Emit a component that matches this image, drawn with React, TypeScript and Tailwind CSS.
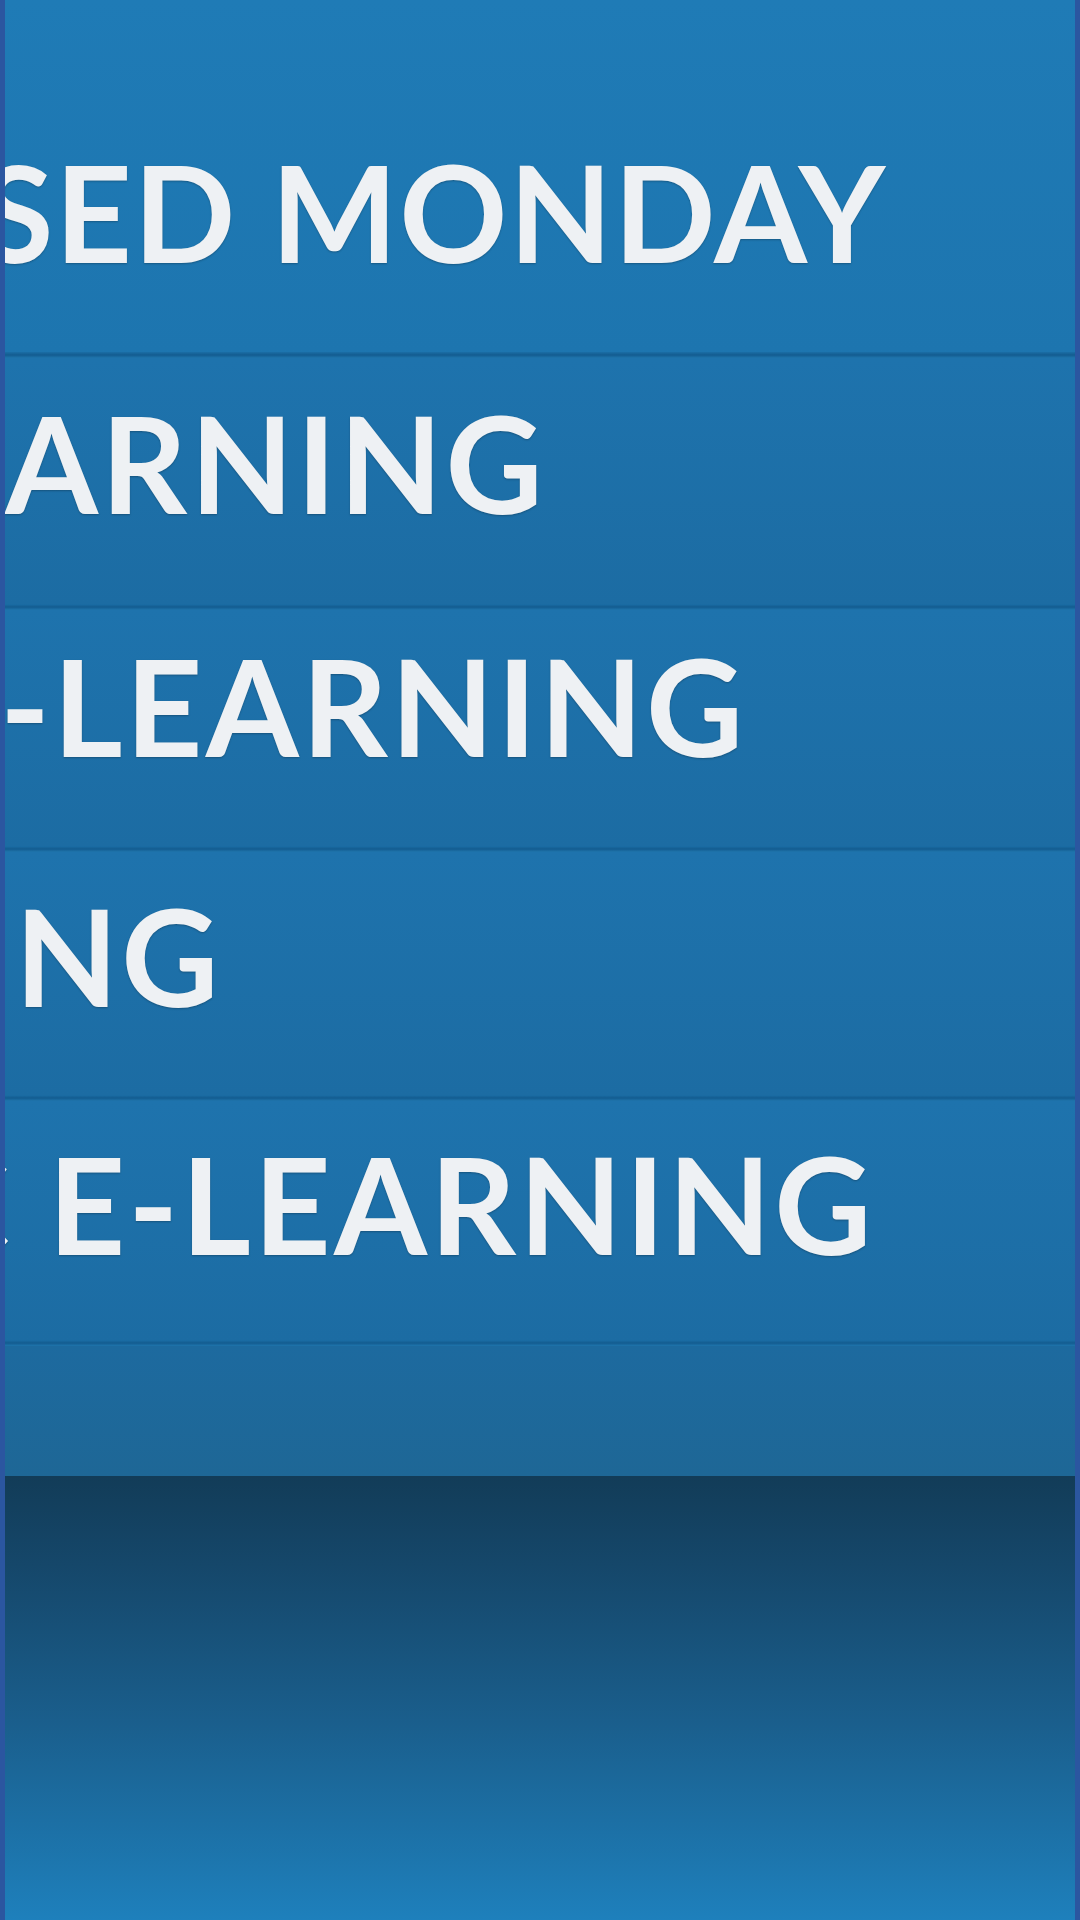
const rows = [
  { label: "ARNING", shift: "ml-0", h: "h-[246px]", pt: "pt-[38px]" },
  { label: "-LEARNING", shift: "-ml-[5px]", h: "h-[236px]", pt: "pt-[29px]" },
  { label: "NG", shift: "ml-[10px]", h: "h-[243px]", pt: "pt-[37px]" },
  { label: "C E-LEARNING", shift: "-ml-[84px]", h: "h-[239px]", pt: "pt-[36px]" },
];

function Divider() {
  return (
    <div className="h-[6px] shrink-0 bg-gradient-to-b from-[#1b6ea6] via-[#135c90] to-[#1f75ad]" />
  );
}

const textCls =
  "whitespace-nowrap text-[134px] font-bold leading-none text-[#eef1f4] [text-shadow:0_1px_2px_rgba(0,0,0,0.25)]";

export default function App() {
  return (
    <div
      className="flex h-[1920px] w-[1080px] flex-col overflow-hidden border-x-[5px] border-[#2b56a0] bg-[#1d70a8]"
      style={{ fontFamily: "Lato, 'Open Sans', sans-serif" }}
    >
      <div className="h-[352px] shrink-0 bg-gradient-to-b from-[#1f7bb6] to-[#1d75af] pt-[145px]">
        <div className={`${textCls} -ml-[25px] tracking-[1.5px]`}>SED MONDAY</div>
      </div>
      {rows.map((r) => (
        <div key={r.label} className="shrink-0">
          <Divider />
          <div className={`${r.h} ${r.pt} bg-gradient-to-b from-[#1e73ad] to-[#1c6ca3]`}>
            <div className={`${textCls} ${r.shift} tracking-[3px]`}>{r.label}</div>
          </div>
        </div>
      ))}
      <Divider />
      <div className="h-[130px] shrink-0 bg-gradient-to-b from-[#1d6a9f] to-[#1e6796]" />
      <div className="flex-1 bg-[linear-gradient(to_bottom,#123c58_0%,#15476a_20%,#1a5e8c_55%,#1e80bc_100%)]" />
    </div>
  );
}
